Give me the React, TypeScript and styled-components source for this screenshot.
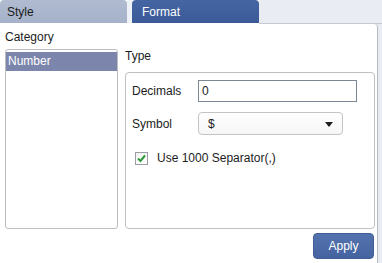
import React from "react";
import styled, { createGlobalStyle } from "styled-components";

const Global = createGlobalStyle`
  html, body { margin: 0; padding: 0; background: #e9ecf2; }
  body { font-family: "Liberation Sans", Arial, sans-serif; font-size: 12px; color: #1c1c1c; }
  * { box-sizing: border-box; }
`;

const Root = styled.div`
  width: 382px;
  height: 263px;
  display: flex;
  flex-direction: column;
  background: #e9ecf2;
  overflow: hidden;
`;

const TabBar = styled.div`
  display: flex;
  height: 24px;
  background: #ffffff;
`;

const Tab = styled.div<{ $active?: boolean }>`
  width: ${(p) => (p.$active ? 127 : 127)}px;
  height: 23px;
  padding-left: ${(p) => (p.$active ? 10 : 7)}px;
  display: flex;
  align-items: center;
  border-radius: 4px 4px 0 0;
  background: ${(p) =>
    p.$active
      ? "linear-gradient(#4565a2, #3b5b98)"
      : "linear-gradient(#b0bbd1, #a6b2ca)"};
  color: ${(p) => (p.$active ? "#ffffff" : "#1a1a1a")};
  font-size: 12px;
`;

const TabGap = styled.div`
  width: 5px;
  height: 23px;
  background: #eef1f6;
`;

const TabFiller = styled.div`
  flex: 1;
  height: 24px;
  background: #e9ecf2;
  border-bottom: 1px solid #c6c9cf;
`;

const Panel = styled.div`
  width: 378px;
  flex: 1;
  background: #ffffff;
  border-right: 1px solid #b7bac0;
  border-top-right-radius: 4px;
  padding: 6px 2px 0 5px;
  display: flex;
  flex-direction: column;
`;

const Label = styled.div`
  line-height: 14px;
  height: 14px;
  font-size: 12px;
  white-space: nowrap;
`;

const Body = styled.div`
  display: flex;
  margin-top: 5px;
  gap: 7px;
`;

const ListBox = styled.div`
  width: 113px;
  height: 180px;
  border: 1px solid #bdbdbd;
  border-radius: 3px;
  padding-top: 2px;
`;

const ListItem = styled.div<{ $selected?: boolean }>`
  height: 19px;
  line-height: 19px;
  padding-left: 2px;
  background: ${(p) => (p.$selected ? "#7c86ad" : "transparent")};
  color: ${(p) => (p.$selected ? "#ffffff" : "#1c1c1c")};
`;

const TypeColumn = styled.div`
  width: 250px;
  display: flex;
  flex-direction: column;
`;

const TypeBox = styled.div`
  margin-top: 9px;
  height: 157px;
  border: 1px solid #c0c0c0;
  border-radius: 4px;
  padding: 7px 0 0 6px;
  display: flex;
  flex-direction: column;
`;

const FieldRow = styled.div<{ $gap?: number }>`
  display: flex;
  align-items: center;
  margin-top: ${(p) => p.$gap ?? 0}px;
`;

const FieldLabel = styled.div`
  width: 66px;
  line-height: 14px;
`;

const TextInput = styled.div`
  width: 159px;
  height: 22px;
  border: 1px solid #7c8796;
  padding-left: 3px;
  display: flex;
  align-items: center;
`;

const Select = styled.div`
  width: 145px;
  height: 23px;
  border: 1px solid #c4c4c4;
  border-radius: 4px;
  background: linear-gradient(#ffffff, #f6f6f6);
  padding: 0 9px 0 9px;
  display: flex;
  align-items: center;
  justify-content: space-between;
`;

const Caret = styled.span`
  width: 0;
  height: 0;
  border-left: 4px solid transparent;
  border-right: 4px solid transparent;
  border-top: 5px solid #1e1e1e;
  margin-top: 1px;
`;

const CheckRow = styled.div`
  display: flex;
  align-items: center;
  margin-top: 16px;
  padding-left: 3px;
  gap: 9px;
`;

const CheckBox = styled.div`
  width: 13px;
  height: 13px;
  border: 1px solid #9a9ea4;
  background: linear-gradient(#f4f4f4, #ffffff);
  display: flex;
  align-items: center;
  justify-content: center;
`;

const Footer = styled.div`
  display: flex;
  justify-content: flex-end;
  margin-top: 4px;
  padding-right: 1px;
`;

const Button = styled.button`
  width: 61px;
  height: 26px;
  border: 1px solid #3f5d96;
  border-radius: 4px;
  background: linear-gradient(#5473ae, #4463a0);
  color: #ffffff;
  font-family: "Liberation Sans", Arial, sans-serif;
  font-size: 12px;
  padding: 0;
`;

export default function App() {
  return (
    <>
      <Global />
      <Root>
        <TabBar>
          <Tab>Style</Tab>
          <TabGap />
          <Tab $active>Format</Tab>
          <TabFiller />
        </TabBar>
        <Panel>
          <Label>Category</Label>
          <Body>
            <ListBox>
              <ListItem $selected>Number</ListItem>
            </ListBox>
            <TypeColumn>
              <Label>Type</Label>
              <TypeBox>
                <FieldRow>
                  <FieldLabel>Decimals</FieldLabel>
                  <TextInput>0</TextInput>
                </FieldRow>
                <FieldRow $gap={10}>
                  <FieldLabel>Symbol</FieldLabel>
                  <Select>
                    <span>$</span>
                    <Caret />
                  </Select>
                </FieldRow>
                <CheckRow>
                  <CheckBox>
                    <svg width="11" height="11" viewBox="0 0 11 11">
                      <path d="M2 5.5 L4.5 8 L9 2.5" fill="none" stroke="#2f9a3a" strokeWidth="2" />
                    </svg>
                  </CheckBox>
                  <Label>Use 1000 Separator(,)</Label>
                </CheckRow>
              </TypeBox>
            </TypeColumn>
          </Body>
          <Footer>
            <Button>Apply</Button>
          </Footer>
        </Panel>
      </Root>
    </>
  );
}
